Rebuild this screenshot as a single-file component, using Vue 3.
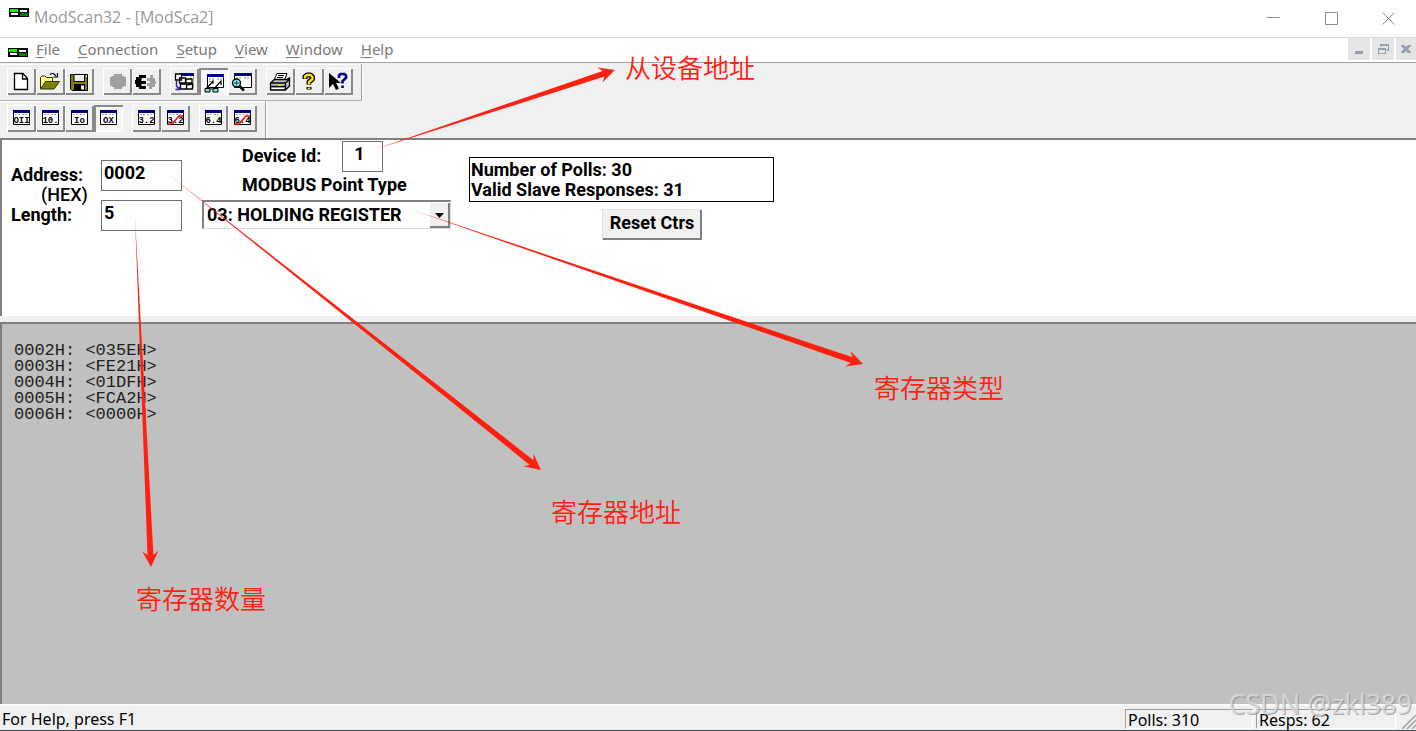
<script setup>
import { ref } from 'vue'

const menus = ['File', 'Connection', 'Setup', 'View', 'Window', 'Help']

const mainGroups = [
  [{ id: 'new', label: 'New' }, { id: 'open', label: 'Open' }, { id: 'save', label: 'Save' }],
  [{ id: 'disconnect', label: 'Disconnect' }, { id: 'connect', label: 'Connect' }],
  [
    { id: 'cascade', label: 'Data definition' },
    { id: 'data', label: 'Show data', pressed: true },
    { id: 'traffic', label: 'Show traffic' },
  ],
  [{ id: 'print', label: 'Print' }, { id: 'about', label: 'About' }, { id: 'context', label: 'Context help' }],
]

const formatGroups = [
  [
    { text: 'OII', label: 'Binary' },
    { text: '10.', label: 'Decimal' },
    { text: 'Io', label: 'Integer' },
    { text: 'OX', label: 'Hex', pressed: true },
  ],
  [{ text: '3.2', label: 'Floating point' }, { text: '3.2', label: 'Swapped floating point', swapped: true }],
  [{ text: '6.4', label: 'Double' }, { text: '6.4', label: 'Swapped double', swapped: true }],
]

const address = ref('0002')
const length = ref('5')
const deviceId = ref('1')
const pointType = ref('03')
const pointTypes = [
  { value: '01', name: '01: COIL STATUS' },
  { value: '02', name: '02: INPUT STATUS' },
  { value: '03', name: '03: HOLDING REGISTER' },
  { value: '04', name: '04: INPUT REGISTER' },
]
const polls = ref(30)
const responses = ref(31)
function resetCounters() {
  polls.value = 0
  responses.value = 0
}

const registers = ['0002H: <035EH>', '0003H: <FE21H>', '0004H: <01DFH>', '0005H: <FCA2H>', '0006H: <0000H>']

const notes = [
  { from: [373, 150], to: [615, 70], x: 625, y: 49, text: '从设备地址' },
  { from: [410, 209], to: [863, 364], x: 874, y: 369, text: '寄存器类型' },
  { from: [168, 174], to: [541, 470], x: 551, y: 493, text: '寄存器地址' },
  { from: [135, 217], to: [151, 567], x: 136, y: 580, text: '寄存器数量' },
]

// Tapered arrow: a point at the start widening to a barbed head.
function arrow({ from, to }) {
  const dx = to[0] - from[0]
  const dy = to[1] - from[1]
  const len = Math.hypot(dx, dy)
  const ux = dx / len
  const uy = dy / len
  const at = (back, side) =>
    `${(to[0] - ux * back - uy * side).toFixed(1)},${(to[1] - uy * back + ux * side).toFixed(1)}`
  return [at(len, 0), at(12, 3), at(16, 8), at(0, 0), at(16, -8), at(12, -3)].join(' ')
}
</script>

<template>
  <div class="window">
    <header class="titlebar">
      <svg class="logo" viewBox="0 0 20 9" aria-hidden="true">
        <path fill="#000" d="M0 0h20v9H0z" />
        <path fill="#0f0" d="M1 1h8v3H1z" />
        <path fill="#fff" d="M11 2h7v2h-7zM2 5h7v2H2z" />
        <path fill="#008000" d="M11 5h8v3h-8z" />
      </svg>
      <h1>ModScan32 - [ModSca2]</h1>
      <div class="caption">
        <button type="button" aria-label="Minimize"><svg viewBox="0 0 13 13"><path d="M0 5.500h13" /></svg></button>
        <button type="button" aria-label="Maximize"><svg viewBox="0 0 13 13"><path d="M.5.5h12v12H.5z" /></svg></button>
        <button type="button" aria-label="Close"><svg viewBox="0 0 13 13"><path d="M.5.5l12 12M12.500.5l-12 12" /></svg></button>
      </div>
    </header>

    <nav class="menubar">
      <svg class="logo small" viewBox="0 0 20 9" aria-hidden="true">
        <path fill="#000" d="M0 0h20v9H0z" />
        <path fill="#0f0" d="M1 1h8v3H1z" />
        <path fill="#fff" d="M11 2h7v2h-7zM2 5h7v2H2z" />
        <path fill="#008000" d="M11 5h8v3h-8z" />
      </svg>
      <button v-for="m in menus" :key="m" type="button" class="menu"><u>{{ m[0] }}</u>{{ m.slice(1) }}</button>
      <div class="mdi">
        <button type="button" aria-label="Minimize document"><svg viewBox="0 0 12 12"><path d="M2 8h8v3H2z" /></svg></button>
        <button type="button" aria-label="Restore document">
          <svg viewBox="0 0 12 12"><path fill-rule="evenodd" d="M3 1h9v7h-2V6h1V3H4v1H3zM1 5h8v6H1zM2 7v3h6V7z" /></svg>
        </button>
        <button type="button" aria-label="Close document"><svg viewBox="0 0 12 12"><path d="M1 2h3l2 2 2-2h3v1L8 6l3 3v1H8L6 8l-2 2H1V9l3-3-3-3z" /></svg></button>
      </div>
    </nav>

    <div class="toolrow first">
      <div class="toolbar" role="toolbar" aria-label="Main">
        <div v-for="(g, i) in mainGroups" :key="i" class="group">
          <button v-for="b in g" :key="b.id" type="button" class="tool" :class="{ pressed: b.pressed }" :aria-label="b.label">
            <svg viewBox="0 0 29 26">
              <g v-if="b.id === 'new'">
                <path fill="#fff" stroke="#000" stroke-width="1.300" d="M7.500 4.500H16l4.500 5v11h-13z" />
                <path fill="none" stroke="#000" stroke-width="1.300" d="M15.500 5v5h5" />
              </g>
              <g v-else-if="b.id === 'open'">
                <path fill="#ffff80" stroke="#333300" d="M4.500 19.500V8.500l1.500-1.500h3l1.500 1.500h6v4" />
                <path fill="#808000" stroke="#333300" d="M4.500 20l5-7.500h14L18 20z" />
                <path fill="none" stroke="#000" stroke-width="1.200" d="M14 5.500c2-1.500 4-1.500 6 1.500M21.500 4v4h-4" />
              </g>
              <g v-else-if="b.id === 'save'">
                <path fill="#808000" stroke="#000" d="M5.500 5.500h17v16H7l-1.500-1.500z" />
                <path fill="#eee" stroke="#000" d="M9 5.500h10.500v7H9z" />
                <path fill="#000" d="M9 15h11v6H9z" />
                <path fill="#eee" d="M16 16.500h3v4h-3zM21 6.500h1v1.500h-1z" />
              </g>
              <path v-else-if="b.id === 'disconnect'" fill="#a0a0a0" d="M11 5h8v2h2v1h2v9h-2v1h-2v2h-8v-2H9v-1H7V8h2V7h2z" />
              <g v-else-if="b.id === 'connect'">
                <path fill="#000" d="M4 8h3V6h7v3H9.500v3H14v3H9.500v2H14v3H7v-2H4v-3H3v-4h1z" />
                <path fill="#a0a0a0" d="M15 9h3V6h3v3h2v3h1v3h-1v3h-3v2h-3v-3h-2v-3h3v-2h-3z" />
              </g>
              <g v-else-if="b.id === 'cascade'">
                <path fill="#fff" stroke="#aaa" d="M9.500 5.500h14v13" />
                <path fill="#000080" d="M10 4h14v3H10z" />
                <g fill="#fff" stroke="#000" stroke-width="1.300">
                  <path d="M5.500 5h6v6h-6zM9.500 9h6v5h-6zM16 10h6v4h-6zM10.500 15h6v5h-6zM16.500 16l6-1v5h-6z" />
                </g>
                <path fill="none" stroke="#3030a0" stroke-width="1.500" d="M6.500 12v5l3 4M5.500 20.500h4v-3" />
              </g>
              <g v-else-if="b.id === 'data'">
                <path fill="#fff" stroke="#000" d="M8.500 5.500h16v13h-16z" />
                <path fill="#000080" d="M8 5h17v3H8z" />
                <path stroke="#888" stroke-dasharray="2 1" d="M10 10h6m2 0h5M10 12.500h4" />
                <path fill="none" stroke="#000" stroke-width="1.200" d="M7 20l7-8v3M15 20l7-8v4" />
                <path fill="#60e8e8" stroke="#000" d="M6 19.500h5V23H6zM14 19.500h5V23h-5z" />
                <path stroke="#000" d="M11 20h3" />
              </g>
              <g v-else-if="b.id === 'traffic'">
                <path fill="#fff" stroke="#000" d="M6.500 4.500h17v14h-17z" />
                <path fill="#000080" d="M6 4h18v3H6z" />
                <path stroke="#888" stroke-dasharray="2 1" d="M8 9h6m2 0h6" />
                <circle cx="8.500" cy="14" r="4" fill="#b8e8e8" stroke="#000" stroke-width="1.400" />
                <path stroke="#008080" stroke-width="1.500" d="M6 14h5M8.500 11.500v5" />
                <path stroke="#000" stroke-width="2.500" d="M11.500 17l4.500 4.500" />
              </g>
              <g v-else-if="b.id === 'print'">
                <path fill="#fff" stroke="#000" d="M8 11l3-6.500h10L18.500 11z" />
                <path stroke="#000" d="M12 6.500h6M11 8.500h6" />
                <path fill="#c0c0c0" stroke="#000" stroke-width="1.300" d="M4.500 14l4-3.500h12l3-1.500v8l-4 4h-15z" />
                <path fill="none" stroke="#000" stroke-width="1.300" d="M4.500 14h15l4-4M19.500 14v7M5 17.500h14" />
                <path stroke="#e8e800" stroke-width="1.500" d="M12 16h4" />
                <path stroke="#fff" d="M6 19.500h12" />
              </g>
              <g v-else-if="b.id === 'about'" fill="none" stroke-linejoin="round">
                <path stroke="#000" stroke-width="5" d="M10 10V7.500L12 6h3.500l2 2v2L14 13v2.500M14 18v2.500" />
                <path stroke="#ffe800" stroke-width="2.400" d="M10 9.500v-2L12 6h3.500l2 2v2L14 13v2M14 18.500v1.500" />
              </g>
              <g v-else>
                <path fill="#000" d="M5 4v15l4-4 3 6 3-1.500-3-5.500h5z" />
                <path fill="none" stroke="#000080" stroke-width="2.600" d="M15 9V6.500L16.500 5h4L22 6.500v2.500l-3.500 3v2.500M18.500 16.500V19" />
              </g>
            </svg>
          </button>
        </div>
      </div>
    </div>

    <div class="toolrow">
      <div class="toolbar" role="toolbar" aria-label="Format">
        <div v-for="(g, i) in formatGroups" :key="i" class="group">
          <button v-for="b in g" :key="b.label" type="button" class="tool" :class="{ pressed: b.pressed }" :aria-label="b.label">
            <svg viewBox="0 0 29 26">
              <path fill="#fff" stroke="#000" d="M6.500 4.500h16v14h-16z" />
              <path fill="#000080" d="M6 4h17v3H6z" />
              <path stroke="#aaa" stroke-dasharray="2 1" d="M8 8.500h5m2 0h6" />
              <text x="14.500" y="17" text-anchor="middle">{{ b.text }}</text>
              <path v-if="b.swapped" fill="none" stroke="#e01010" stroke-width="1.600" d="M7 18h4l7-8h4" />
            </svg>
          </button>
        </div>
      </div>
    </div>

    <form class="settings" @submit.prevent>
      <div class="labels">
        <label for="address">Address:</label>
        <span class="hex">(HEX)</span>
        <label for="length">Length:</label>
      </div>
      <div class="fields">
        <input id="address" v-model="address" type="text" />
        <input id="length" v-model="length" type="text" />
      </div>
      <div class="device">
        <div class="device-row">
          <label for="device">Device Id:</label>
          <input id="device" v-model="deviceId" type="text" />
        </div>
        <label for="point" class="point-label">MODBUS Point Type</label>
        <div class="combo">
          <select id="point" v-model="pointType">
            <option v-for="p in pointTypes" :key="p.value" :value="p.value">{{ p.name }}</option>
          </select>
          <span class="drop" aria-hidden="true"><svg viewBox="0 0 9 5"><path d="M0 0h9L4.500 5z" /></svg></span>
        </div>
      </div>
      <div class="counters">
        <div class="stats">
          <p>Number of Polls: {{ polls }}</p>
          <p>Valid Slave Responses: {{ responses }}</p>
        </div>
        <button type="button" class="reset" @click="resetCounters">Reset Ctrs</button>
      </div>
    </form>

    <main class="registers">
      <p v-for="r in registers" :key="r">{{ r }}</p>
    </main>

    <footer class="statusbar">
      <span class="help">For Help, press F1</span>
      <span class="pane">Polls: 310</span>
      <span class="pane resps">Resps: 62</span>
      <svg class="grip" viewBox="0 0 14 14" aria-hidden="true">
        <path stroke="#a0a0a0" stroke-width="1.500" d="M0 14L14 0M5 14l9-9M10 14l4-4" />
      </svg>
    </footer>

    <svg class="arrows" aria-hidden="true">
      <polygon v-for="n in notes" :key="n.text" :points="arrow(n)" />
    </svg>
    <span v-for="n in notes" :key="n.text" class="note" :style="{ left: n.x + 'px', top: n.y + 'px' }">{{ n.text }}</span>
    <span class="watermark">CSDN @zkl389</span>
  </div>
</template>

<style>
body {
  margin: 0;
}
</style>

<style scoped>
* {
  box-sizing: border-box;
}
.window {
  position: relative;
  display: flex;
  flex-direction: column;
  min-height: 100vh;
  overflow: hidden;
  background: #f0f0f0;
  font-family: "Noto Sans", "Noto Sans CJK SC", sans-serif;
  font-size: 15px;
  color: #000;
}
button {
  margin: 0;
  padding: 0;
  border: 0;
  background: none;
  font: inherit;
  color: inherit;
}
svg {
  display: block;
}
p {
  margin: 0;
}
.titlebar {
  display: flex;
  height: 38px;
  padding-left: 9px;
  background: #fff;
  border-bottom: 1px solid #dcdcdc;
}
.logo {
  width: 20px;
  height: 9px;
  margin-top: 8px;
}
.titlebar h1 {
  flex: 1;
  margin: 0 0 0 5px;
  font: 400 16px/35px "Open Sans", sans-serif;
  color: #999;
}
.caption {
  display: flex;
  height: 36px;
}
.caption button {
  display: grid;
  place-items: center;
  width: 58px;
}
.caption button:last-child {
  width: 56px;
}
.caption svg {
  width: 13px;
  height: 13px;
  fill: none;
  stroke: #8c8c8c;
}
.menubar {
  display: flex;
  height: 24px;
  padding-left: 8px;
  background: #fff;
}
.logo.small {
  margin: 10px 0 0;
}
.menu {
  margin-left: 8px;
  margin-right: 10px;
  height: 22px;
  line-height: 22px;
  color: #7a7a7a;
}
.menu u {
  text-underline-offset: 2px;
}
.mdi {
  display: flex;
  gap: 2px;
  height: 22px;
  margin-left: auto;
}
.mdi button {
  display: grid;
  place-items: center;
  width: 22px;
  background: #e5e5e5;
}
.mdi button:last-child {
  width: 20px;
}
.mdi svg {
  width: 12px;
  height: 12px;
  fill: #93a0b0;
}
.toolrow {
  display: flex;
  height: 37px;
}
.toolrow.first {
  height: 39px;
  border-top: 1px solid #a0a0a0;
  padding-top: 1px;
}
.toolbar {
  display: flex;
  gap: 9px;
  padding: 4px 8px 0 7px;
  border-right: 1px solid #a0a0a0;
  box-shadow: inset 0 1px #fff, 1px 0 #fff;
}
.toolrow.first .toolbar {
  border-bottom: 1px solid #b0b0b0;
}
.group {
  display: flex;
}
.tool {
  width: 29px;
  height: 27px;
  background: #f0f0f0;
  box-shadow: inset 1px 1px #fff, inset -2px -2px #8a8a8a;
}
.tool.pressed {
  background: #f6f6f6;
  box-shadow: inset 2px 2px #8a8a8a, inset -1px -1px #fff;
}
.tool svg {
  width: 29px;
  height: 26px;
}
.tool text {
  font: 700 9px "Liberation Mono", monospace;
}
.settings {
  display: flex;
  align-items: flex-start;
  min-height: 178px;
  padding-left: 9px;
  background: #fff;
  border: solid #808080;
  border-width: 2px 0 0 2px;
  font: 700 18px/20px Roboto, "Liberation Sans", sans-serif;
}
.labels {
  display: flex;
  flex-direction: column;
  width: 90px;
  padding-top: 25px;
}
.hex {
  padding-left: 30px;
  font-weight: 500;
}
.fields {
  display: flex;
  flex-direction: column;
  gap: 9px;
  width: 81px;
  padding-top: 20px;
}
input {
  width: 100%;
  height: 31px;
  margin: 0;
  padding: 0 2px 6px;
  border: 1px solid #707070;
  border-radius: 0;
  background: #fff;
  font: inherit;
  color: #000;
}
.device {
  width: 249px;
  margin-left: 20px;
  padding-top: 1px;
}
.device-row {
  display: flex;
  justify-content: space-between;
  padding-left: 40px;
  padding-right: 68px;
  line-height: 30px;
}
.device-row input {
  width: 41px;
  text-align: center;
  padding-right: 8px;
}
.point-label {
  display: block;
  margin: 3px 0 5px 40px;
}
.combo {
  position: relative;
  height: 29px;
  border: 2px solid #808080;
  border-right: 1px solid #ddd;
  border-bottom: 1px solid #ddd;
}
select {
  display: block;
  width: 100%;
  height: 100%;
  padding: 0 0 0 3px;
  border: 0;
  background: #fff;
  appearance: none;
  font: inherit;
  color: #000;
}
.drop {
  position: absolute;
  top: 0;
  right: 0;
  bottom: 0;
  display: grid;
  place-items: center;
  width: 21px;
  background: #f0f0f0;
  box-shadow: inset 1px 1px #fff, inset -2px -2px #808080;
  pointer-events: none;
}
.drop svg {
  width: 9px;
  height: 5px;
}
.counters {
  width: 305px;
  margin-left: 18px;
  padding-top: 17px;
}
.stats {
  padding: 2px 1px 1px;
  border: 1px solid #000;
}
.reset {
  display: block;
  width: 100px;
  height: 31px;
  margin: 7px 0 0 133px;
  padding-bottom: 3px;
  background: #f0f0f0;
  box-shadow: inset 1px 1px #e0e0e0, inset -2px -2px #808080;
}
.registers {
  flex: 1;
  margin-top: 6px;
  padding: 19px 12px;
  background: #c0c0c0;
  border: solid #808080;
  border-width: 2px 0 0 2px;
  font: 17px/16px "Liberation Mono", monospace;
  color: #222;
}
.statusbar {
  display: flex;
  height: 27px;
  padding: 3px 0 1px 2px;
  border-top: 2px solid #fafafa;
  border-bottom: 1px solid #404858;
  font-size: 16px;
  line-height: 20px;
}
.help {
  flex: 1;
}
.pane {
  width: 128px;
  margin-right: 3px;
  padding-left: 2px;
  border: 1px solid #a0a0a0;
  border-right-color: #fff;
  border-bottom-color: #fff;
}
.resps {
  width: 140px;
  margin-right: 6px;
}
.grip {
  width: 14px;
  height: 14px;
  align-self: flex-end;
}
.arrows {
  position: absolute;
  inset: 0;
  width: 100%;
  height: 100%;
  fill: #ff2010;
  pointer-events: none;
}
.note {
  position: absolute;
  font: 350 26px/36px "Noto Sans CJK SC", sans-serif;
  color: #ff2010;
  white-space: nowrap;
}
.watermark {
  position: absolute;
  right: 4px;
  bottom: 11px;
  font: 27px/32px "Noto Sans", sans-serif;
  color: rgba(225, 225, 225, 0.8);
  text-shadow: 1px 1px rgba(120, 120, 120, 0.6);
}
</style>
